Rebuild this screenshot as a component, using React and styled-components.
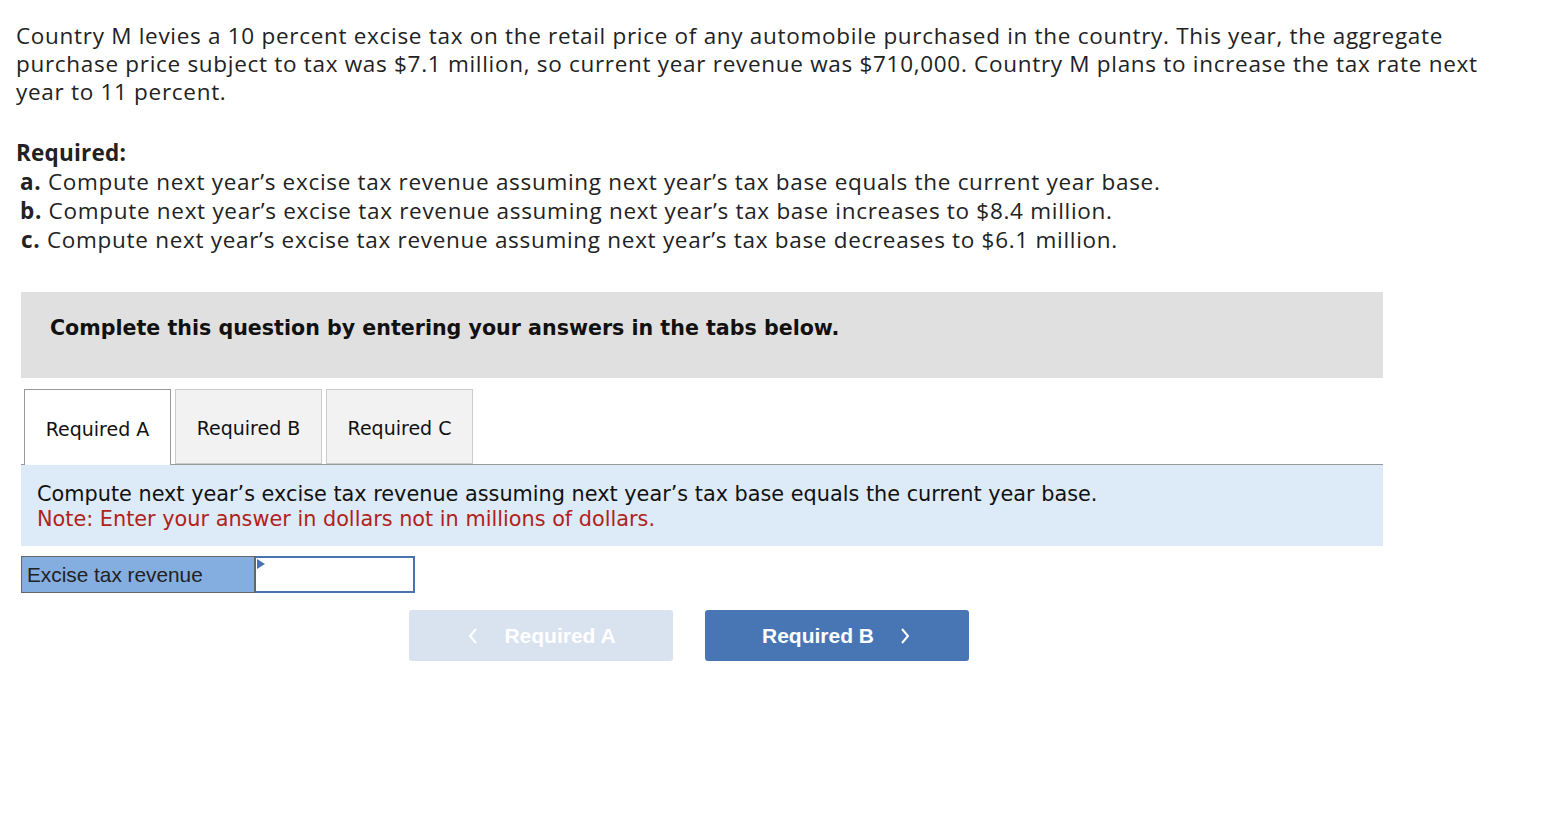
import React from 'react'
import styled, { createGlobalStyle } from 'styled-components'

const Global = createGlobalStyle`
  body {
    margin: 0;
    background: #fff;
    font-family: "Open Sans", sans-serif;
  }
`

const Page = styled.div`
  padding: 22px 16px 0 16px;
  width: 1550px;
  box-sizing: border-box;
`

const Intro = styled.p`
  margin: 0;
  font-family: "Open Sans", sans-serif;
  font-size: 22.5px;
  letter-spacing: 0.7px;
  line-height: 28px;
  color: #222;
  max-width: 1462px;
`

const Required = styled.div`
  margin-top: 32px;
  font-family: "Open Sans", sans-serif;
  font-size: 22.5px;
  letter-spacing: 0.7px;
  line-height: 29px;
  color: #222;
`

const ReqTitle = styled.div`
  font-weight: 700;
  letter-spacing: 0.2px;
`

const ReqItem = styled.div`
  padding-left: ${p => p.$indent || 4}px;
  b {
    font-weight: 700;
  }
`

const Panel = styled.div`
  margin: 38px 0 0 5px;
  width: 1362px;
`

const Banner = styled.div`
  background: #e0e0e0;
  height: 86px;
  padding: 24px 0 0 29px;
  box-sizing: border-box;
  font-family: "DejaVu Sans", Verdana, sans-serif;
  font-weight: 700;
  font-size: 20.6px;
  color: #111;
`

const TabRow = styled.div`
  display: flex;
  gap: 4px;
  margin-top: 11px;
  padding-left: 3px;
  border-bottom: 1px solid #999;
  height: 75px;
`

const Tab = styled.div`
  width: 147px;
  box-sizing: border-box;
  display: flex;
  align-items: center;
  justify-content: center;
  font-family: "DejaVu Sans", Verdana, sans-serif;
  font-size: 19px;
  color: #111;
  background: ${p => (p.$active ? '#fff' : '#f2f2f2')};
  border: 1px solid ${p => (p.$active ? '#999' : '#ccc')};
  border-bottom: ${p => (p.$active ? 'none' : '1px solid #ccc')};
  margin-bottom: ${p => (p.$active ? '-1px' : '0')};
  padding-top: 2px;
`

const Info = styled.div`
  background: #ddeaf7;
  height: 81px;
  padding: 17px 0 0 16px;
  box-sizing: border-box;
  font-family: "DejaVu Sans", Verdana, sans-serif;
  font-size: 20.8px;
  line-height: 25px;
  color: #111;
`

const Note = styled.div`
  color: #b0221b;
`

const AnswerRow = styled.div`
  display: flex;
  margin-top: 10px;
  height: 37px;
`

const Label = styled.div`
  width: 235px;
  box-sizing: border-box;
  background: #84ade0;
  border: 1px solid #666;
  border-right: 2px solid #666;
  padding: 6px 0 0 5px;
  font-family: "Liberation Sans", Arial, sans-serif;
  font-size: 20.8px;
  color: #222;
`

const InputCell = styled.div`
  position: relative;
  width: 159px;
  box-sizing: border-box;
  border: 2px solid #4a72b0;
  border-left: none;
  background: #fff;
  &::before {
    content: '';
    position: absolute;
    top: 1px;
    left: 1px;
    border-top: 5px solid transparent;
    border-bottom: 5px solid transparent;
    border-left: 8px solid #4a72b0;
  }
`

const NavRow = styled.div`
  display: flex;
  gap: 32px;
  margin: 17px 0 0 388px;
`

const NavButton = styled.div`
  width: 264px;
  height: 51px;
  border-radius: 3px;
  background: ${p => (p.$disabled ? '#d9e3ef' : '#4876b4')};
  color: #fff;
  display: flex;
  align-items: center;
  justify-content: center;
  gap: 24px;
  font-family: "Liberation Sans", Arial, sans-serif;
  font-weight: 700;
  font-size: 21px;
  svg {
    width: 14px;
    height: 18px;
  }
`

const Chevron = ({ dir }) => (
  <svg viewBox="0 0 14 18" fill="none" stroke="#fff" strokeWidth="2">
    {dir === 'left' ? <path d="M10 2 L4 9 L10 16" /> : <path d="M4 2 L10 9 L4 16" />}
  </svg>
)

export default function App() {
  return (
    <Page>
      <Global />
      <Intro>
        Country M levies a 10 percent excise tax on the retail price of any automobile purchased in the country. This year, the aggregate purchase price subject to tax was $7.1 million, so current year revenue was $710,000. Country M plans to increase the tax rate next year to 11 percent.
      </Intro>
      <Required>
        <ReqTitle>Required:</ReqTitle>
        <ReqItem><b>a.</b> Compute next year’s excise tax revenue assuming next year’s tax base equals the current year base.</ReqItem>
        <ReqItem><b>b.</b> Compute next year’s excise tax revenue assuming next year’s tax base increases to $8.4 million.</ReqItem>
        <ReqItem $indent={5}><b>c.</b> Compute next year’s excise tax revenue assuming next year’s tax base decreases to $6.1 million.</ReqItem>
      </Required>
      <Panel>
        <Banner>Complete this question by entering your answers in the tabs below.</Banner>
        <TabRow>
          <Tab $active>Required A</Tab>
          <Tab>Required B</Tab>
          <Tab>Required C</Tab>
        </TabRow>
        <Info>
          Compute next year’s excise tax revenue assuming next year’s tax base equals the current year base.
          <Note>Note: Enter your answer in dollars not in millions of dollars.</Note>
        </Info>
        <AnswerRow>
          <Label>Excise tax revenue</Label>
          <InputCell />
        </AnswerRow>
        <NavRow>
          <NavButton $disabled>
            <Chevron dir="left" />
            <span>Required A</span>
          </NavButton>
          <NavButton>
            <span>Required B</span>
            <Chevron dir="right" />
          </NavButton>
        </NavRow>
      </Panel>
    </Page>
  )
}
